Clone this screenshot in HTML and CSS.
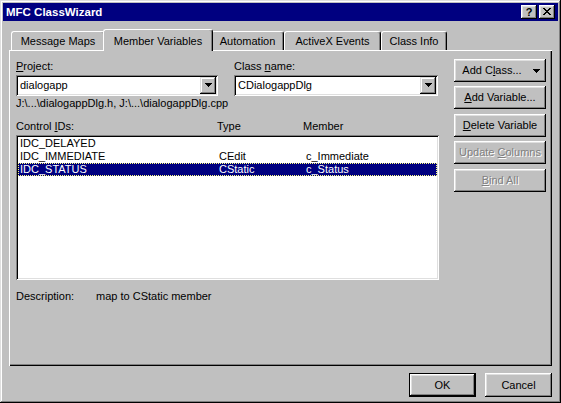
FILE: index.html
```html
<!DOCTYPE html>
<html>
<head>
<meta charset="utf-8">
<title>MFC ClassWizard</title>
<link rel="stylesheet" href="styles.css">
</head>
<body>
<div class="window">
  <div class="titlebar">
    <span class="title">MFC ClassWizard</span>
    <div class="tbtns">
      <span class="tbtn help">?</span>
      <span class="tbtn">
        <svg width="8" height="7" viewBox="0 0 8 7" shape-rendering="crispEdges"><path d="M0 0h2v1H0zM6 0h2v1H6zM1 1h2v1H1zM5 1h2v1H5zM2 2h4v1H2zM3 3h2v1H3zM2 4h4v1H2zM1 5h2v1H1zM5 5h2v1H5zM0 6h2v1H0zM6 6h2v1H6z" fill="#000"/></svg>
      </span>
    </div>
  </div>
  <div class="content">
    <div class="tabs">
      <div class="tab t-mm">Message Maps</div>
      <div class="tab t-mv active">Member Variables</div>
      <div class="tab t-au">Automation</div>
      <div class="tab t-ax">ActiveX Events</div>
      <div class="tab t-ci">Class Info</div>
    </div>
    <div class="panel">
      <div class="leftcol">
        <div class="fields">
          <div class="field f-project">
            <div class="label"><u>P</u>roject:</div>
            <div class="combo">
              <span class="combo-text">dialogapp</span>
              <span class="dropbtn"><svg width="7" height="4" viewBox="0 0 7 4" shape-rendering="crispEdges"><path d="M0 0h7v1H0zM1 1h5v1H1zM2 2h3v1H2zM3 3h1v1H3z" fill="#000"/></svg></span>
            </div>
          </div>
          <div class="field f-class">
            <div class="label">Class <u>n</u>ame:</div>
            <div class="combo">
              <span class="combo-text">CDialogappDlg</span>
              <span class="dropbtn"><svg width="7" height="4" viewBox="0 0 7 4" shape-rendering="crispEdges"><path d="M0 0h7v1H0zM1 1h5v1H1zM2 2h3v1H2zM3 3h1v1H3z" fill="#000"/></svg></span>
            </div>
          </div>
        </div>
        <div class="path">J:\...\dialogappDlg.h, J:\...\dialogappDlg.cpp</div>
        <div class="listhead">
          <span>Control <u>I</u>Ds:</span>
          <span>Type</span>
          <span>Member</span>
        </div>
        <div class="listbox">
          <div class="row"><span>IDC_DELAYED</span><span></span><span></span></div>
          <div class="row"><span>IDC_IMMEDIATE</span><span>CEdit</span><span>c_Immediate</span></div>
          <div class="row selected"><span>IDC_STATUS</span><span>CStatic</span><span>c_Status</span></div>
        </div>
        <div class="desc">
          <span>Description:</span>
          <span>map to CStatic member</span>
        </div>
      </div>
      <div class="rightcol">
        <div class="btn btn-split"><span>Add C<u>l</u>ass...</span><svg width="7" height="4" viewBox="0 0 7 4" shape-rendering="crispEdges"><path d="M0 0h7v1H0zM1 1h5v1H1zM2 2h3v1H2zM3 3h1v1H3z" fill="#000"/></svg></div>
        <div class="btn"><span><u>A</u>dd Variable...</span></div>
        <div class="btn"><span><u>D</u>elete Variable</span></div>
        <div class="btn disabled"><span>Update <u>C</u>olumns</span></div>
        <div class="btn disabled"><span><u>B</u>ind All</span></div>
      </div>
    </div>
    <div class="footer">
      <div class="btn dlgbtn default"><span>OK</span></div>
      <div class="btn dlgbtn"><span>Cancel</span></div>
    </div>
  </div>
</div>
</body>
</html>
```
FILE: styles.css
```css
* { box-sizing: border-box; }
html, body { margin: 0; padding: 0; }
body {
  background: #c0c0c0;
  font-family: "Liberation Sans", Arial, sans-serif;
  font-size: 11px;
  line-height: 13px;
  color: #000;
}
u { text-decoration-thickness: 1px; text-underline-offset: 1px; }

.window {
  width: 561px;
  height: 403px;
  padding: 3px;
  background: #c0c0c0;
  box-shadow: inset -1px -1px #000, inset 1px 1px #dfdfdf, inset -2px -2px #808080, inset 2px 2px #fff;
  display: flex;
  flex-direction: column;
}

.titlebar {
  height: 18px;
  background: #000080;
  display: flex;
  align-items: center;
  justify-content: space-between;
  padding: 0 3px 0 3px;
}
.title { color: #fff; font-weight: bold; font-size: 11.5px; }
.tbtns { display: flex; gap: 2px; }
.tbtn {
  width: 16px;
  height: 14px;
  background: #c0c0c0;
  box-shadow: inset -1px -1px #000, inset 1px 1px #fff, inset -2px -2px #808080, inset 2px 2px #dfdfdf;
  display: flex;
  align-items: center;
  justify-content: center;
  padding-bottom: 1px;
}
.tbtn.help { font-weight: bold; font-size: 11px; line-height: 12px; }

.content {
  flex: 1;
  padding: 0 6px;
  display: flex;
  flex-direction: column;
}

.tabs {
  height: 21px;
  margin-top: 8px;
  display: flex;
  align-items: flex-end;
  padding-left: 2px;
}
.tab {
  height: 19px;
  border-left: 1px solid #fff;
  border-top: 1px solid #fff;
  border-right: 1px solid #000;
  border-radius: 3px 3px 0 0;
  box-shadow: inset -1px 0 #808080;
  padding-top: 3px;
  text-align: center;
}
.tab.active {
  height: 22px;
  margin: 0 -2px -1px -2px;
  padding-top: 5px;
  background: #c0c0c0;
  position: relative;
  z-index: 1;
}
.t-mm { width: 94px; }
.t-mv { width: 110px; }
.t-au { width: 73px; }
.t-ax { width: 97px; }
.t-ci { width: 66px; }

.panel {
  height: 316px;
  box-shadow: inset 1px 1px #fff, inset -1px -1px #000, inset -2px -2px #808080;
  padding: 9px 6px 0 7px;
  display: flex;
  gap: 15px;
}
.leftcol { width: 423px; padding-top: 1px; display: flex; flex-direction: column; }
.rightcol { width: 92px; display: flex; flex-direction: column; }

.fields { display: flex; gap: 16px; }
.f-project { width: 202px; }
.f-class { width: 204px; }
.label { margin-bottom: 2px; }

.sunken {
  box-shadow: inset 1px 1px #808080, inset -1px -1px #fff, inset 2px 2px #000, inset -2px -2px #dfdfdf;
}
.combo {
  height: 21px;
  background: #fff;
  box-shadow: inset 1px 1px #808080, inset -1px -1px #fff, inset 2px 2px #000, inset -2px -2px #dfdfdf;
  padding: 2px;
  display: flex;
  align-items: center;
}
.combo-text { flex: 1; padding-left: 2px; line-height: 17px; }
.dropbtn {
  width: 16px;
  height: 17px;
  background: #c0c0c0;
  box-shadow: inset -1px -1px #000, inset 1px 1px #dfdfdf, inset -2px -2px #808080, inset 2px 2px #fff;
  display: flex;
  align-items: center;
  justify-content: center;
  padding-bottom: 1px;
}

.path { margin-top: 1px; }

.listhead {
  margin-top: 10px;
  display: grid;
  grid-template-columns: 201px 86px 1fr;
}

.listbox {
  margin-top: 2px;
  height: 145px;
  background: #fff;
  box-shadow: inset 1px 1px #808080, inset -1px -1px #fff, inset 2px 2px #000, inset -2px -2px #dfdfdf;
  padding: 2px;
}
.row {
  height: 13px;
  display: grid;
  grid-template-columns: 199px 87px 1fr;
  padding-left: 2px;
  white-space: nowrap;
}
.row.selected {
  background: #000080;
  color: #fff;
  outline: 1px dotted #ffff7f;
  outline-offset: -1px;
}

.desc {
  margin-top: 10px;
  display: grid;
  grid-template-columns: 80px 1fr;
}

.btn {
  height: 23px;
  background: #c0c0c0;
  box-shadow: inset -1px -1px #000, inset 1px 1px #fff, inset -2px -2px #808080, inset 2px 2px #dfdfdf;
  display: flex;
  align-items: center;
  justify-content: center;
  white-space: nowrap;
}
.rightcol .btn { margin-bottom: 4px; }
.rightcol .btn:nth-child(2), .rightcol .btn:nth-child(4) { margin-bottom: 5px; }
.btn-split { gap: 11px; padding-left: 2px; }
.btn.disabled { color: #808080; text-shadow: 1px 1px 0 #fff; }

.footer {
  display: flex;
  justify-content: flex-end;
  gap: 9px;
  padding-top: 7px;
}
.dlgbtn { width: 67px; height: 24px; }
.dlgbtn.default {
  border: 1px solid #000;
}
```
